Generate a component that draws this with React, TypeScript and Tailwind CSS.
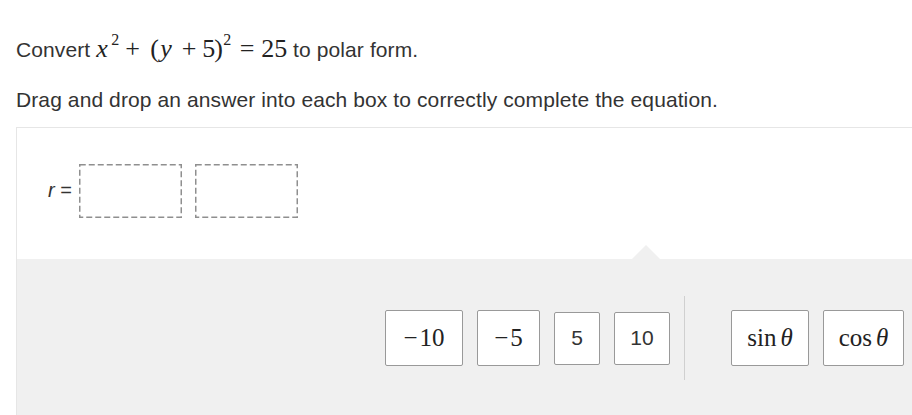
import React from "react";

const serif = "font-['Liberation_Serif','DejaVu_Serif',serif]";

function Tile({ children, math, w }: { children: React.ReactNode; math?: boolean; w: string }) {
  return (
    <div
      className={
        math
          ? `flex h-[56px] items-center justify-center rounded-[2px] border border-[#999] bg-white text-[25px] text-[#222] ${serif} ${w}`
          : `flex h-[53px] items-center justify-center rounded-[2px] border border-[#999] bg-white text-[21px] text-[#333] ${w}`
      }
    >
      {children}
    </div>
  );
}

function DropBox({ className = "" }: { className?: string }) {
  return (
    <div className={`relative h-[54px] w-[103px] ${className}`}>
      <svg className="absolute inset-0" width="103" height="54">
        <rect x="0.75" y="0.75" width="101.5" height="52.5" fill="none" stroke="#8f8f8f" strokeWidth="1.5" strokeDasharray="6 3" />
      </svg>
    </div>
  );
}

export default function App() {
  return (
    <div className="h-[415px] w-[912px] overflow-hidden bg-white font-['Liberation_Sans',Arial,sans-serif] text-[#333]">
      <p className="h-[60px] pl-4 pt-[36px] text-[21px] leading-[24px] tracking-[0.1px]">
        Convert{" "}
        <span className={`text-[26px] leading-none tracking-normal text-[#222] ${serif}`}>
          <i className="inline-block w-[15px]">x</i>
          <span className="relative -top-[12px] inline-block w-[9px] text-[16px]">2</span>
          <span className="inline-block w-[25px] text-center">+</span>
          <span className="inline-block w-[15px] pl-[5px]">(</span>
          <i className="inline-block w-[16px]">y</i>
          <span className="inline-block w-[26px] text-center">+</span>
          <span className="inline-block w-[12px]">5</span>
          <span className="inline-block w-[9px]">)</span>
          <span className="relative -top-[12px] inline-block w-[10px] text-[16px]">2</span>
          <span className="inline-block w-[28px] text-center">=</span>
          <span>25</span>
        </span>{" "}
        to polar form.
      </p>
      <p className="mt-[28px] pl-4 text-[21px] leading-[24px] tracking-[0.1px]">
        Drag and drop an answer into each box to correctly complete the equation.
      </p>

      <div className="ml-4 mt-[15px] w-[1000px] border-l border-t border-[#e6e6e6]">
        <div className="flex h-[131px] items-start pl-[31px] pt-[36px]">
          <div className="mt-[14px] mr-[7px] text-[20px] leading-[24px] text-[#333]">
            <i>r</i> =
          </div>
          <DropBox />
          <DropBox className="ml-[13px]" />
        </div>

        <div className="relative flex h-[158px] items-center bg-[#f0f0f0] pl-[368px]">
          <div className="absolute left-[615px] top-[-14px] h-0 w-0 border-x-[14px] border-b-[14px] border-x-transparent border-b-[#f0f0f0]" />
          <div className="flex items-center gap-[14px]">
            <Tile math w="w-[78px]">
              <span>
                <span className="mr-[2px]">−</span>10
              </span>
            </Tile>
            <Tile math w="w-[63px]">
              <span>
                <span className="mr-[2px]">−</span>5
              </span>
            </Tile>
            <Tile w="w-[46px]">5</Tile>
            <Tile w="w-[56px]">10</Tile>
          </div>
          <div className="ml-[14px] h-[84px] w-px bg-[#d0d0d0]" />
          <div className="ml-[46px] flex items-center gap-[14px]">
            <Tile math w="w-[78px]">
              <span>
                sin<i className="ml-[4px]">θ</i>
              </span>
            </Tile>
            <Tile math w="w-[81px]">
              <span>
                cos<i className="ml-[4px]">θ</i>
              </span>
            </Tile>
          </div>
        </div>
      </div>
    </div>
  );
}
